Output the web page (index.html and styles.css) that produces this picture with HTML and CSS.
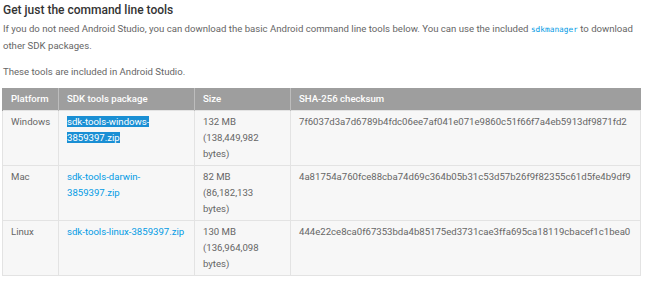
FILE: index.html
```html
<!DOCTYPE html>
<html lang="en">
<head>
  <title>Get just the command line tools</title>
  <meta charset="utf-8">
  <link rel="stylesheet" href="styles.css">
</head>
<body>
  <h2 class="title">Get just the command line tools</h2>
  <p>If you do not need Android Studio, you can download the basic Android command line tools below. You can use the included <code>sdkmanager</code> to download other SDK packages.</p>
  <p>These tools are included in Android Studio.</p>
  <table class="downloads">
    <thead>
      <tr>
        <th class="col-platform">Platform</th>
        <th class="col-package">SDK tools package</th>
        <th class="col-size">Size</th>
        <th>SHA-256 checksum</th>
      </tr>
    </thead>
    <tbody>
      <tr>
        <td>Windows</td>
        <td><a href="#"><span class="selected">sdk-tools-windows-<br>3859397.zip</span></a></td>
        <td>132 MB<br>(138,449,982<br>bytes)</td>
        <td>7f6037d3a7d6789b4fdc06ee7af041e071e9860c51f66f7a4eb5913df9871fd2</td>
      </tr>
      <tr>
        <td>Mac</td>
        <td><a href="#">sdk-tools-darwin-<br>3859397.zip</a></td>
        <td>82 MB<br>(86,182,133<br>bytes)</td>
        <td>4a81754a760fce88cba74d69c364b05b31c53d57b26f9f82355c61d5fe4b9df9</td>
      </tr>
      <tr>
        <td>Linux</td>
        <td><a href="#">sdk-tools-linux-3859397.zip</a></td>
        <td>130 MB<br>(136,964,098<br>bytes)</td>
        <td>444e22ce8ca0f67353bda4b85175ed3731cae3ffa695ca18119cbacef1c1bea0</td>
      </tr>
    </tbody>
  </table>
</body>
</html>
```

FILE: styles.css
```css
*, *::before, *::after {
  margin: 0;
  padding: 0;
  box-sizing: border-box;
}

body {
  padding: 0 9px 0 2px;
  background-color: #FFFFFF;
  color: #666666;
  font-family: "Roboto", sans-serif;
  font-size: 9.6px;
  line-height: 16px;
}

.title {
  padding-left: 1px;
  font-size: 12px;
  font-weight: 500;
  line-height: 20px;
  color: #333333;
}

p {
  margin: 1px 0 10px 1px;
}

p + p {
  margin-bottom: 8px;
}

code {
  font-family: "DejaVu Sans Mono", monospace;
  font-size: 7.8px;
  color: #039BE5;
}

a {
  color: #039BE5;
  text-decoration: none;
}

.selected {
  background-color: #1A8FD4;
  color: #FFFFFF;
}

.downloads {
  width: 100%;
  table-layout: fixed;
  border-collapse: collapse;
}

.downloads th {
  padding: 3px 8px;
  background-color: #9E9E9E;
  border-left: 1px solid #BDBDBD;
  color: #FFFFFF;
  font-weight: 500;
  text-align: left;
}

.downloads th:first-child {
  border-left-color: #9E9E9E;
}

.downloads td {
  padding: 3px 8px;
  background-color: #F7F7F7;
  border: 1px solid #E3E3E3;
  vertical-align: top;
}

.col-platform {
  width: 56px;
}

.col-package {
  width: 136px;
}

.col-size {
  width: 96px;
}
```
